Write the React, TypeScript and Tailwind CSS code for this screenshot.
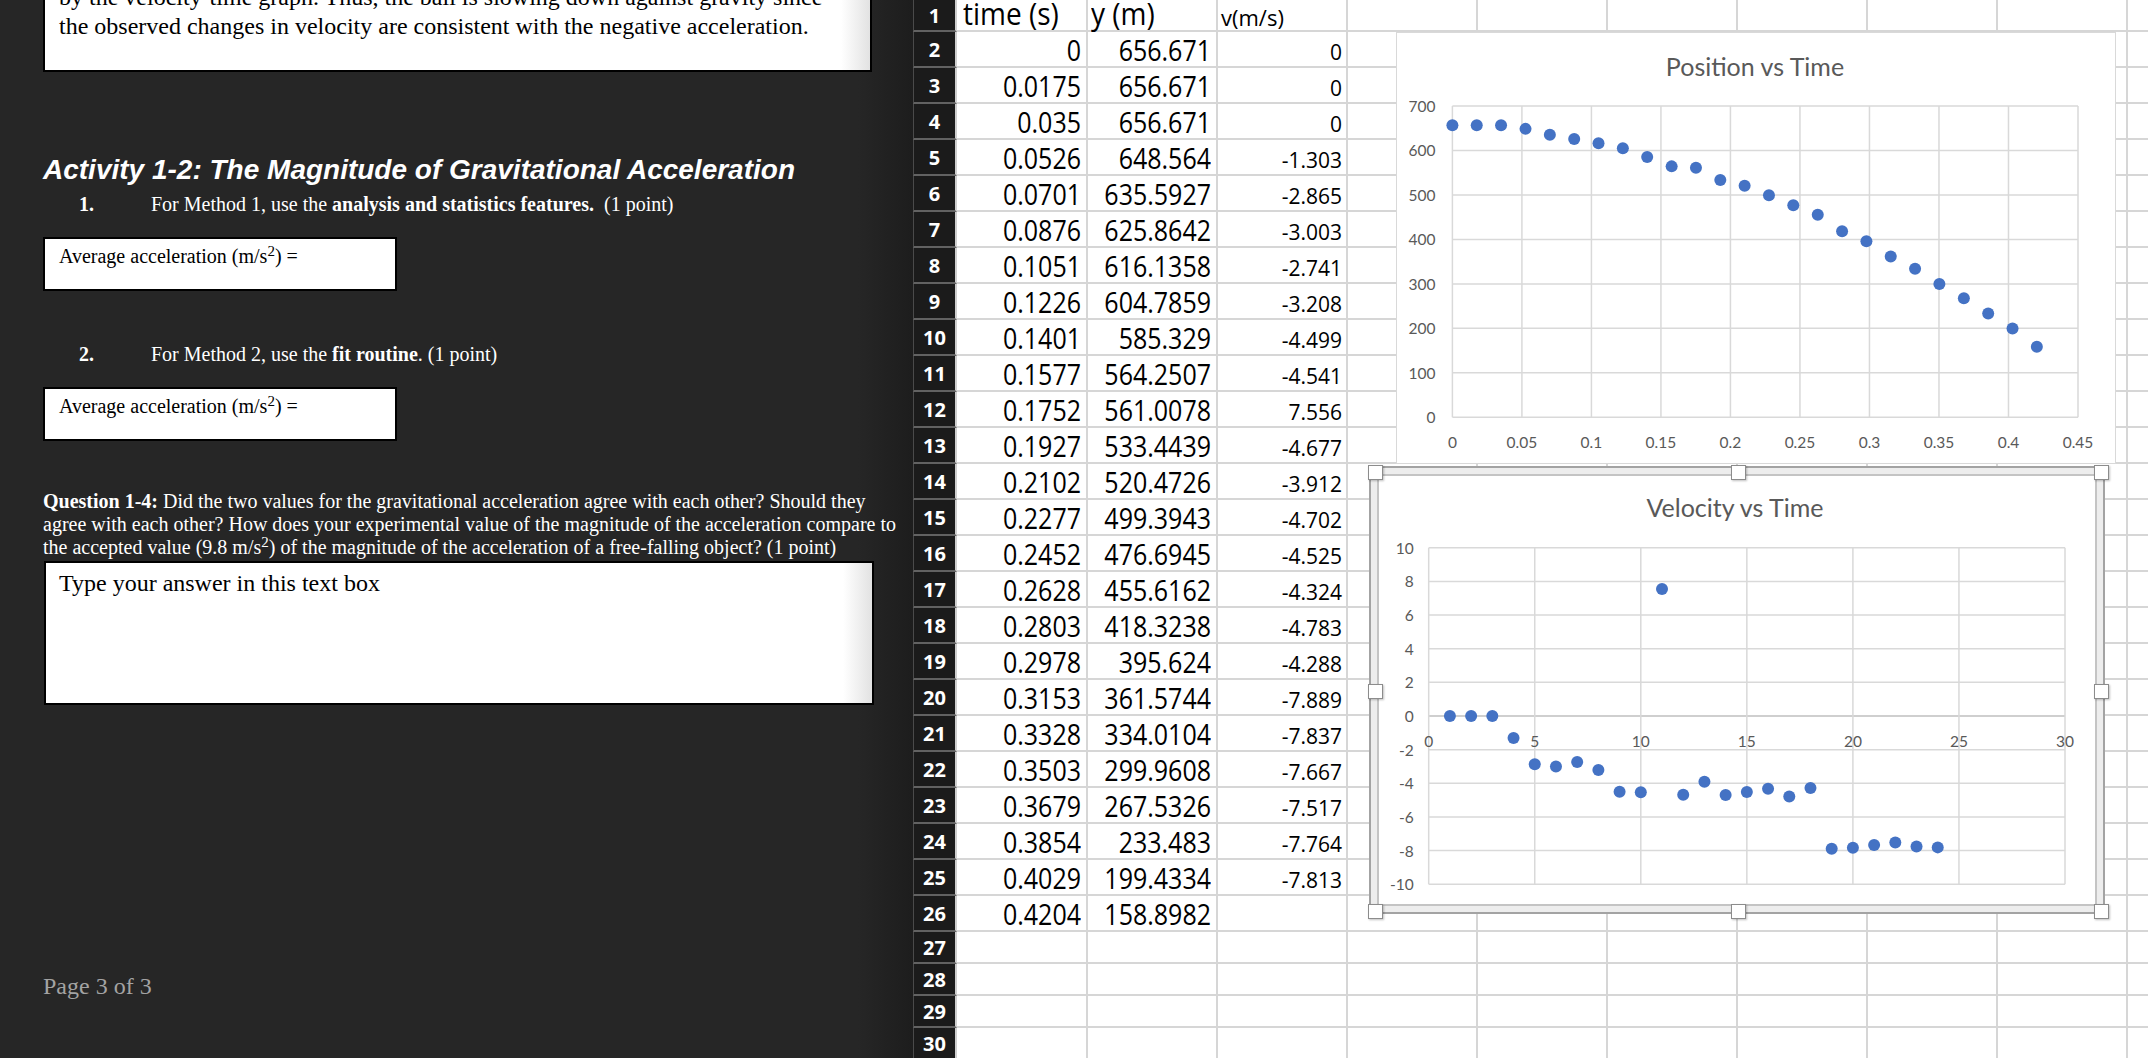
import React from 'react';

// lab data: time, height, velocity (rows 2..26 of the sheet)
const T = ['0', '0.0175', '0.035', '0.0526', '0.0701', '0.0876', '0.1051', '0.1226', '0.1401', '0.1577', '0.1752', '0.1927', '0.2102', '0.2277', '0.2452', '0.2628', '0.2803', '0.2978', '0.3153', '0.3328', '0.3503', '0.3679', '0.3854', '0.4029', '0.4204'];
const Y = ['656.671', '656.671', '656.671', '648.564', '635.5927', '625.8642', '616.1358', '604.7859', '585.329', '564.2507', '561.0078', '533.4439', '520.4726', '499.3943', '476.6945', '455.6162', '418.3238', '395.624', '361.5744', '334.0104', '299.9608', '267.5326', '233.483', '199.4334', '158.8982'];
const V = ['0', '0', '0', '-1.303', '-2.865', '-3.003', '-2.741', '-3.208', '-4.499', '-4.541', '7.556', '-4.677', '-3.912', '-4.702', '-4.525', '-4.324', '-4.783', '-4.288', '-7.889', '-7.837', '-7.667', '-7.517', '-7.764', '-7.813'];

const DOT = '#4472C4';
const GRID = '#d9d9d9';
const LABEL = '#595959';

function Worksheet() {
  return (
    <div className="w-[913px] shrink-0 overflow-hidden bg-[linear-gradient(90deg,#262626_94%,#1d1d1d)] pl-[43px] font-['Liberation_Serif',serif] text-white">
      <div className="-mt-[24px] h-[96px] w-[829px] whitespace-nowrap border-2 border-black bg-[linear-gradient(90deg,#fff_96.5%,#e2e2e2)] px-[14px] pt-[5px] text-[24px] leading-[29px] text-black">
        by the velocity-time graph. Thus, the ball is slowing down against gravity since
        <br />
        the observed changes in velocity are consistent with the negative acceleration.
      </div>

      <h2 className="mt-[82px] font-['Liberation_Sans',Arial,sans-serif] text-[28px] font-bold italic leading-[32px]">
        Activity 1-2: The Magnitude of Gravitational Acceleration
      </h2>

      <div className="mt-[6px] flex text-[20px] leading-[24px]">
        <span className="w-[108px] shrink-0 pl-[36px] font-bold">1.</span>
        <span>
          For Method 1, use the <b>analysis and statistics features.</b>&nbsp; (1 point)
        </span>
      </div>
      <div className="mt-[21px] h-[54px] w-[354px] border-2 border-black bg-white pl-[14px] pt-[5px] text-[20px] leading-[24px] text-black">
        Average acceleration (m/s<sup>2</sup>) =
      </div>

      <div className="mt-[51px] flex text-[20px] leading-[24px]">
        <span className="w-[108px] shrink-0 pl-[36px] font-bold">2.</span>
        <span>
          For Method 2, use the <b>fit routine</b>. (1 point)
        </span>
      </div>
      <div className="mt-[21px] h-[54px] w-[354px] border-2 border-black bg-white pl-[14px] pt-[5px] text-[20px] leading-[24px] text-black">
        Average acceleration (m/s<sup>2</sup>) =
      </div>

      <p className="mt-[49px] whitespace-nowrap text-[20px] leading-[23px]">
        <b>Question 1-4:</b> Did the two values for the gravitational acceleration agree with each other? Should they
        <br />
        agree with each other? How does your experimental value of the magnitude of the acceleration compare to
        <br />
        the accepted value (9.8 m/s<sup>2</sup>) of the magnitude of the acceleration of a free-falling object? (1 point)
      </p>
      <div className="ml-px mt-[2px] h-[144px] w-[830px] border-2 border-black bg-[linear-gradient(90deg,#fff_96.5%,#e2e2e2)] pl-[13px] pt-[6px] text-[24px] leading-[28px] text-black">
        Type your answer in this text box
      </div>

      <div className="mt-[267px] text-[24px] leading-[28px] text-[#a3a3a3]">Page 3 of 3</div>
    </div>
  );
}

function PositionChart() {
  const x = (t: number) => 55.4 + (t / 0.45) * 625.6;
  const y = (v: number) => 384.3 - (v / 700) * 311.3;
  const xs = [0, 0.05, 0.1, 0.15, 0.2, 0.25, 0.3, 0.35, 0.4, 0.45];
  const ys = [0, 100, 200, 300, 400, 500, 600, 700];
  return (
    <div className="absolute left-[483px] top-[32px] h-[432px] w-[720px] border border-[#d9d9d9] bg-white">
      <svg width={718} height={430} className="block font-['Lato',sans-serif]">
        <text x={358} y={33} textAnchor="middle" dominantBaseline="central" fontSize={25} fill={LABEL}>
          Position vs Time
        </text>
        {ys.map((v) => (
          <g key={v}>
            <line x1={x(0)} x2={x(0.45)} y1={y(v)} y2={y(v)} stroke={GRID} strokeWidth={1.5} />
            <text x={38.4} y={y(v)} textAnchor="end" dominantBaseline="central" fontSize={15.5} fill={LABEL}>
              {v}
            </text>
          </g>
        ))}
        {xs.map((t) => (
          <g key={t}>
            <line x1={x(t)} x2={x(t)} y1={y(0)} y2={y(700)} stroke={GRID} strokeWidth={1.5} />
            <text x={x(t)} y={408.7} textAnchor="middle" dominantBaseline="central" fontSize={15.5} fill={LABEL}>
              {t}
            </text>
          </g>
        ))}
        {T.map((t, i) => (
          <circle key={i} cx={x(parseFloat(t))} cy={y(parseFloat(Y[i]))} r={6} fill={DOT} />
        ))}
      </svg>
    </div>
  );
}

function VelocityChart() {
  const x = (i: number) => 49.7 + (i / 30) * 636.3;
  const y = (v: number) => 240 - v * 16.815;
  const xs = [0, 5, 10, 15, 20, 25, 30];
  const ys = [10, 8, 6, 4, 2, 0, -2, -4, -6, -8, -10];
  return (
    <div className="absolute left-[456px] top-[466px] h-[448px] w-[736px] border-2 border-[#a3a3a3] bg-[#ededed] p-[6px]">
      <div className="h-full w-full border-2 border-[#c4c4c4] bg-white">
        <svg width={716} height={428} className="block font-['Lato',sans-serif]">
          <text x={356} y={31} textAnchor="middle" dominantBaseline="central" fontSize={25} fill={LABEL}>
            Velocity vs Time
          </text>
          {ys.map((v) => (
            <g key={v}>
              <line x1={x(0)} x2={x(30)} y1={y(v)} y2={y(v)} stroke={v === 0 ? '#bfbfbf' : GRID} strokeWidth={1.5} />
              <text x={34.7} y={y(v)} textAnchor="end" dominantBaseline="central" fontSize={15.5} fill={LABEL}>
                {v}
              </text>
            </g>
          ))}
          {xs.map((i) => (
            <g key={i}>
              <line x1={x(i)} x2={x(i)} y1={y(10)} y2={y(-10)} stroke={GRID} strokeWidth={1.5} />
              <text x={x(i)} y={264.7} textAnchor="middle" dominantBaseline="central" fontSize={15.5} fill={LABEL}>
                {i}
              </text>
            </g>
          ))}
          {V.map((v, i) => (
            <circle key={i} cx={x(i + 1)} cy={y(parseFloat(v))} r={6} fill={DOT} />
          ))}
        </svg>
      </div>
      {/* selection handles */}
      <span className="absolute left-[-3px] top-[-3px] size-[15px] border border-[#8c8c8c] bg-white shadow-[1px_1px_2px_rgba(0,0,0,0.25)]" />
      <span className="absolute left-[360px] top-[-3px] size-[15px] border border-[#8c8c8c] bg-white shadow-[1px_1px_2px_rgba(0,0,0,0.25)]" />
      <span className="absolute left-[723px] top-[-3px] size-[15px] border border-[#8c8c8c] bg-white shadow-[1px_1px_2px_rgba(0,0,0,0.25)]" />
      <span className="absolute left-[-3px] top-[216px] size-[15px] border border-[#8c8c8c] bg-white shadow-[1px_1px_2px_rgba(0,0,0,0.25)]" />
      <span className="absolute left-[723px] top-[216px] size-[15px] border border-[#8c8c8c] bg-white shadow-[1px_1px_2px_rgba(0,0,0,0.25)]" />
      <span className="absolute left-[-3px] top-[436px] size-[15px] border border-[#8c8c8c] bg-white shadow-[1px_1px_2px_rgba(0,0,0,0.25)]" />
      <span className="absolute left-[360px] top-[436px] size-[15px] border border-[#8c8c8c] bg-white shadow-[1px_1px_2px_rgba(0,0,0,0.25)]" />
      <span className="absolute left-[723px] top-[436px] size-[15px] border border-[#8c8c8c] bg-white shadow-[1px_1px_2px_rgba(0,0,0,0.25)]" />
    </div>
  );
}

const cell = 'shrink-0 border-b-2 border-r-2 border-[#d6d6d6]';

function Big({ children }: { children: React.ReactNode }) {
  return <span className="inline-block origin-bottom scale-y-[1.2] text-[25px] leading-none">{children}</span>;
}

function SheetRow({ r }: { r: number }) {
  const i = r - 2;
  const hasData = r >= 2 && r <= 26;
  return (
    <div className={`flex ${r === 1 || r > 26 ? 'h-[32px]' : 'h-[36px]'}`}>
      <div className="flex w-[44px] shrink-0 items-center justify-center border-b-2 border-l border-r-2 border-b-[#626262] border-l-[#4a4a4a] border-r-[#cfcfcf] bg-[#1b1b1b] pt-[2px] text-[20px] font-bold leading-none text-white">
        {r}
      </div>
      {r === 1 ? (
        <>
          <div className={`${cell} flex w-[131px] items-end pb-[2px] pl-[6px]`}>
            <span className="inline-block origin-bottom scale-y-[1.08] text-[28px] leading-none">time (s)</span>
          </div>
          <div className={`${cell} flex w-[130px] items-end pb-[2px] pl-[3px]`}>
            <span className="inline-block origin-bottom scale-y-[1.08] text-[28px] leading-none">y (m)</span>
          </div>
          <div className={`${cell} flex w-[130px] items-end pb-[2px] pl-[3px] text-[22px] leading-none`}>v(m/s)</div>
        </>
      ) : (
        <>
          <div className={`${cell} flex w-[131px] items-end justify-end pb-[1px] pr-[5px]`}>
            {hasData && <Big>{T[i]}</Big>}
          </div>
          <div className={`${cell} flex w-[130px] items-end justify-end pb-[1px] pr-[5px]`}>
            {hasData && <Big>{Y[i]}</Big>}
          </div>
          <div className={`${cell} flex w-[130px] items-end justify-end pb-[3px] pr-[4px] text-[21px] leading-none`}>
            {r <= 25 ? V[i] : ''}
          </div>
        </>
      )}
      {[0, 1, 2, 3, 4, 5].map((k) => (
        <div key={k} className={`${cell} w-[130px]`} />
      ))}
      <div className="flex-1 border-b-2 border-[#d6d6d6]" />
    </div>
  );
}

function Sheet() {
  const rows = Array.from({ length: 30 }, (_, k) => k + 1);
  return (
    <div className="relative flex-1 overflow-hidden bg-white font-['Open_Sans',sans-serif] text-black">
      {rows.map((r) => (
        <SheetRow key={r} r={r} />
      ))}
      <PositionChart />
      <VelocityChart />
    </div>
  );
}

export default function App() {
  return (
    <div className="flex h-[1058px] w-[2148px] overflow-hidden bg-[#262626]">
      <Worksheet />
      <Sheet />
    </div>
  );
}
